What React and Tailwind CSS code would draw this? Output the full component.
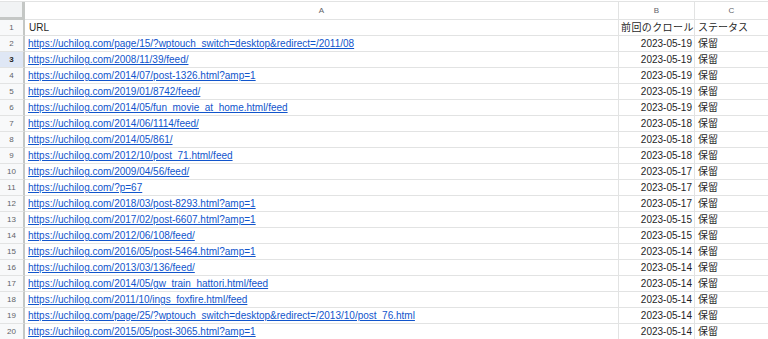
const ROWS = [
  ["https://uchilog.com/page/15/?wptouch_switch=desktop&redirect=/2011/08", "2023-05-19"],
  ["https://uchilog.com/2008/11/39/feed/", "2023-05-19"],
  ["https://uchilog.com/2014/07/post-1326.html?amp=1", "2023-05-19"],
  ["https://uchilog.com/2019/01/8742/feed/", "2023-05-19"],
  ["https://uchilog.com/2014/05/fun_movie_at_home.html/feed", "2023-05-19"],
  ["https://uchilog.com/2014/06/1114/feed/", "2023-05-18"],
  ["https://uchilog.com/2014/05/861/", "2023-05-18"],
  ["https://uchilog.com/2012/10/post_71.html/feed", "2023-05-18"],
  ["https://uchilog.com/2009/04/56/feed/", "2023-05-17"],
  ["https://uchilog.com/?p=67", "2023-05-17"],
  ["https://uchilog.com/2018/03/post-8293.html?amp=1", "2023-05-17"],
  ["https://uchilog.com/2017/02/post-6607.html?amp=1", "2023-05-15"],
  ["https://uchilog.com/2012/06/108/feed/", "2023-05-15"],
  ["https://uchilog.com/2016/05/post-5464.html?amp=1", "2023-05-14"],
  ["https://uchilog.com/2013/03/136/feed/", "2023-05-14"],
  ["https://uchilog.com/2014/05/gw_train_hattori.html/feed", "2023-05-14"],
  ["https://uchilog.com/2011/10/ings_foxfire.html/feed", "2023-05-14"],
  ["https://uchilog.com/page/25/?wptouch_switch=desktop&redirect=/2013/10/post_76.html", "2023-05-14"],
  ["https://uchilog.com/2015/05/post-3065.html?amp=1", "2023-05-14"],
];

const cell = "h-[16px] border-b border-[#e2e3e3] flex items-center overflow-hidden whitespace-nowrap";

function RowNum({ n, active }) {
  return (
    <div
      className={`${cell} justify-center border-r-[2px] border-r-[#c4c7c5] text-[8px] ${
        active ? "bg-[#dfe7f5] text-[#1f1f1f] font-bold" : "bg-[#f8f9fa] text-[#5f6368]"
      }`}
    >
      {n}
    </div>
  );
}

export default function App() {
  return (
    <div
      className="w-[768px] h-[339px] overflow-hidden bg-white text-[#1f1f1f] pt-[1px]"
      style={{ fontFamily: '"Liberation Sans", Arial, "Noto Sans CJK JP", sans-serif' }}
    >
      <div className="grid grid-cols-[25px_594px_76px_1fr] border-t border-[#e2e3e3]">
        {/* column headers */}
        <div className="h-[18px] bg-[#f1f3f4] border-r-[3px] border-b-[3px] border-[#c4c7c5]" />
        <div className="h-[18px] flex items-center justify-center text-[8px] text-[#5f6368] border-r border-b border-[#e2e3e3]">A</div>
        <div className="h-[18px] flex items-center justify-center text-[8px] text-[#5f6368] border-r border-b border-[#e2e3e3]">B</div>
        <div className="h-[18px] flex items-center justify-center text-[8px] text-[#5f6368] border-b border-[#e2e3e3]">C</div>

        {/* row 1 */}
        <RowNum n={1} />
        <div className={`${cell} border-r pl-[4px] text-[10px]`}>URL</div>
        <div className={`${cell} border-r pl-[2px] text-[10px] tracking-[0.4px]`}>前回のクロール</div>
        <div className={`${cell} pl-[3px] text-[10px]`}>ステータス</div>

        {ROWS.map(([url, date], i) => (
          <div key={i} className="contents">
            <RowNum n={i + 2} active={i + 2 === 3} />
            <div className={`${cell} border-r pl-[3px] text-[10px]`}>
              <span className="text-[#1155cc] underline">{url}</span>
            </div>
            <div className={`${cell} border-r justify-end pr-[2px] text-[10px]`}>{date}</div>
            <div className={`${cell} pl-[3px] text-[10px]`}>保留</div>
          </div>
        ))}
      </div>
    </div>
  );
}
